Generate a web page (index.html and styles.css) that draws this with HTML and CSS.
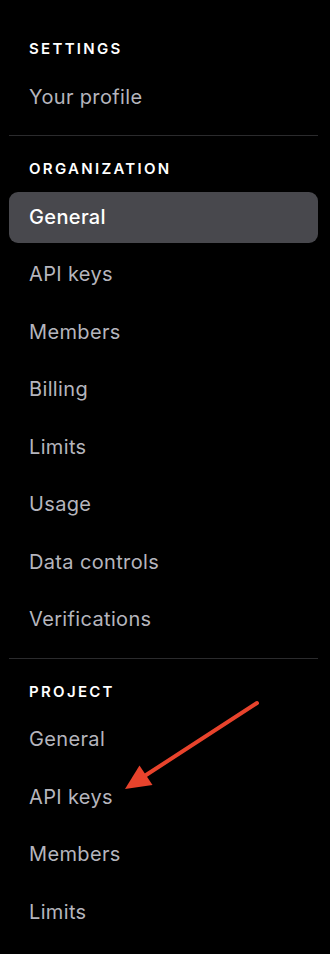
FILE: index.html
```html
<!DOCTYPE html>
<html lang="en">
<head>
<meta charset="utf-8">
<title>Settings</title>
<link rel="stylesheet" href="styles.css">
</head>
<body>
<nav class="sidebar">
  <section class="section section-first">
    <div class="section-title">SETTINGS</div>
    <ul class="items">
      <li class="item">Your profile</li>
    </ul>
  </section>
  <hr class="divider">
  <section class="section">
    <div class="section-title">ORGANIZATION</div>
    <ul class="items">
      <li class="item active">General</li>
      <li class="item">API keys</li>
      <li class="item">Members</li>
      <li class="item">Billing</li>
      <li class="item">Limits</li>
      <li class="item">Usage</li>
      <li class="item">Data controls</li>
      <li class="item">Verifications</li>
    </ul>
  </section>
  <hr class="divider">
  <section class="section">
    <div class="section-title">PROJECT</div>
    <ul class="items">
      <li class="item">General</li>
      <li class="item">API keys</li>
      <li class="item">Members</li>
      <li class="item">Limits</li>
    </ul>
  </section>
</nav>
<svg class="arrow" width="330" height="954" viewBox="0 0 330 954" aria-hidden="true">
  <line x1="257" y1="703" x2="143" y2="777" stroke="#e8432c" stroke-width="4" stroke-linecap="round"/>
  <polygon points="125,789 139.5,765.5 152.5,785" fill="#e8432c"/>
</svg>
</body>
</html>
```

FILE: styles.css
```css
html, body {
  margin: 0;
  padding: 0;
  background: #000;
}
body {
  font-family: Inter, "Liberation Sans", sans-serif;
  width: 330px;
  height: 954px;
  overflow: hidden;
  position: relative;
}
.sidebar {
  padding: 0 12px 0 9px;
}
.section-first {
  padding-top: 39px;
}
.section-title {
  height: 20px;
  line-height: 20px;
  font-size: 15px;
  font-weight: 600;
  letter-spacing: 2.3px;
  color: #fff;
  padding-left: 20px;
  margin-bottom: 12.5px;
}
.items {
  list-style: none;
  margin: 0;
  padding: 0;
  display: flex;
  flex-direction: column;
  gap: 6.5px;
}
.item {
  height: 51px;
  line-height: 51px;
  padding-left: 20px;
  font-size: 20px;
  letter-spacing: 0.35px;
  color: #b5b5bd;
  border-radius: 9px;
}
.item.active {
  background: #48484d;
  color: #fff;
  font-weight: 500;
}
.divider {
  border: 0;
  height: 1px;
  background: #2b2b2d;
  margin: 12.5px 0 23px;
}
.arrow {
  position: absolute;
  left: 0;
  top: 0;
  pointer-events: none;
}
```
